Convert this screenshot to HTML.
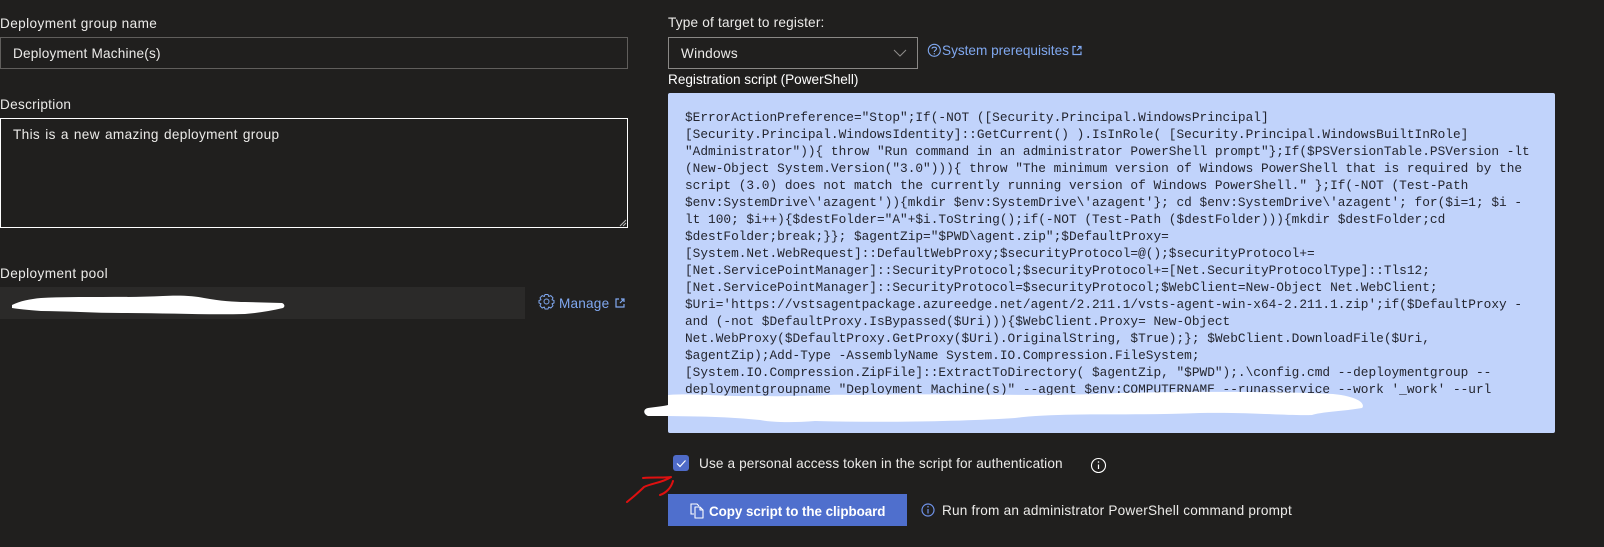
<!DOCTYPE html>
<html>
<head>
<meta charset="utf-8">
<style>
html,body{margin:0;padding:0;background:#201f1e}
body{position:relative;width:1604px;height:547px;overflow:hidden;font-family:"Liberation Sans",sans-serif;font-size:13.6px;color:#ecebe9}
.t{position:absolute;white-space:pre;line-height:18px}
.b{position:absolute;box-sizing:border-box}
.link{color:#80a8f0}
pre{position:absolute;left:685px;top:109px;margin:0;font-family:"Liberation Mono",monospace;font-size:12.8px;line-height:17px;color:#23252f}
svg{position:absolute;left:0;top:0}
</style>
</head>
<body>
<div class="t" style="left:0;top:15px;letter-spacing:.4px">Deployment group name</div>
<div class="b" style="left:0;top:37px;width:628px;height:32px;border:1px solid #605e5c"></div>
<div class="t" style="left:13px;top:45px;letter-spacing:.2px">Deployment Machine(s)</div>

<div class="t" style="left:0;top:96px;letter-spacing:.3px">Description</div>
<div class="b" style="left:0;top:118px;width:628px;height:110px;border:1px solid #fff"></div>
<div class="t" style="left:13px;top:126px;letter-spacing:.35px;word-spacing:1px">This is a new amazing deployment group</div>

<div class="t" style="left:0;top:265px;letter-spacing:.4px">Deployment pool</div>
<div class="b" style="left:0;top:287px;width:525px;height:32px;background:#2b2a29"></div>
<div class="t link" style="left:559px;top:295px;letter-spacing:.2px">Manage</div>

<div class="t" style="left:668px;top:14px;letter-spacing:.2px">Type of target to register:</div>
<div class="b" style="left:668px;top:37px;width:250px;height:32px;border:1px solid #8a8886"></div>
<div class="t" style="left:681px;top:45px;letter-spacing:.25px">Windows</div>
<div class="t link" style="left:942px;top:42px;letter-spacing:0">System prerequisites</div>

<div class="t" style="left:668px;top:71px;color:#fff;letter-spacing:0">Registration script (PowerShell)</div>
<div class="b" style="left:668px;top:93px;width:887px;height:340px;background:#c1d3fb;border-radius:2px"></div>
<pre>$ErrorActionPreference="Stop";If(-NOT ([Security.Principal.WindowsPrincipal]
[Security.Principal.WindowsIdentity]::GetCurrent() ).IsInRole( [Security.Principal.WindowsBuiltInRole]
"Administrator")){ throw "Run command in an administrator PowerShell prompt"};If($PSVersionTable.PSVersion -lt
(New-Object System.Version("3.0"))){ throw "The minimum version of Windows PowerShell that is required by the
script (3.0) does not match the currently running version of Windows PowerShell." };If(-NOT (Test-Path
$env:SystemDrive\'azagent')){mkdir $env:SystemDrive\'azagent'}; cd $env:SystemDrive\'azagent'; for($i=1; $i -
lt 100; $i++){$destFolder="A"+$i.ToString();if(-NOT (Test-Path ($destFolder))){mkdir $destFolder;cd
$destFolder;break;}}; $agentZip="$PWD\agent.zip";$DefaultProxy=
[System.Net.WebRequest]::DefaultWebProxy;$securityProtocol=@();$securityProtocol+=
[Net.ServicePointManager]::SecurityProtocol;$securityProtocol+=[Net.SecurityProtocolType]::Tls12;
[Net.ServicePointManager]::SecurityProtocol=$securityProtocol;$WebClient=New-Object Net.WebClient;
$Uri='https://vstsagentpackage.azureedge.net/agent/2.211.1/vsts-agent-win-x64-2.211.1.zip';if($DefaultProxy -
and (-not $DefaultProxy.IsBypassed($Uri))){$WebClient.Proxy= New-Object
Net.WebProxy($DefaultProxy.GetProxy($Uri).OriginalString, $True);}; $WebClient.DownloadFile($Uri,
$agentZip);Add-Type -AssemblyName System.IO.Compression.FileSystem;
[System.IO.Compression.ZipFile]::ExtractToDirectory( $agentZip, "$PWD");.\config.cmd --deploymentgroup --
deploymentgroupname "Deployment Machine(s)" --agent $env:COMPUTERNAME --runasservice --work '_work' --url</pre>

<div class="b" style="left:673px;top:455px;width:16px;height:16px;background:#4f6bc8;border-radius:3px"></div>
<div class="t" style="left:699px;top:455px;letter-spacing:.13px">Use a personal access token in the script for authentication</div>

<div class="b" style="left:668px;top:494px;width:239px;height:32px;background:#4f6fcd"></div>
<div class="t" style="left:709px;top:503px;color:#fff;font-weight:bold;font-size:13.4px;letter-spacing:-.05px">Copy script to the clipboard</div>
<div class="t" style="left:942px;top:502px;letter-spacing:.21px">Run from an administrator PowerShell command prompt</div>

<svg width="1604" height="547" viewBox="0 0 1604 547" fill="none">
  <!-- pool scribble -->
  <path d="M12 305 C20 301 30 299 41 298 C80 296 125 298 163 296 C180 295 195 296 204 298 C220 301 235 302 245 302 L282 303 C285 304 285 307 283 308 C270 311 258 313 245 314 C205 315 165 313 122 313 C95 313 65 311 41 311 C28 310 18 309 12 308 Z" fill="#fff"/>
  <!-- script scribble -->
  <path d="M668 395 C700 393 720 397 760 396 C800 397 830 394 850 395 C950 393 1050 397 1120 393 C1200 391 1300 392 1333 394 C1362 397 1365 405 1362 408 C1345 411 1320 412 1312 415 C1290 416 1250 412 1200 413 C1130 416 1060 412 1015 418 C970 421 890 423 815 421 C790 423 770 422 760 420 C730 417 700 416 648 416 C643 414 643 409 648 408 C655 407 665 406 668 405 Z" fill="#fff"/>
  <!-- chevron -->
  <path d="M894 50 L900 56 L906 50" stroke="#8f8d8b" stroke-width="1"/>
  <!-- help icon -->
  <circle cx="934.300" cy="50.300" r="6" stroke="#80a8f0" stroke-width="1.100"/>
  <path d="M932 48.800 C932 46.600 936.500 46.600 936.500 48.800 C936.500 50.300 934.300 50.300 934.300 52" stroke="#80a8f0" stroke-width="1.100"/>
  <circle cx="934.300" cy="53.800" r=".7" fill="#80a8f0"/>
  <!-- external link 1 -->
  <path d="M1076 46.500 H1073 V54.500 H1081 V51.500 M1077 50.500 L1081 46.500 M1078 46.500 H1081 V49.500" stroke="#80a8f0" stroke-width="1.200"/>
  <!-- gear -->
  <circle cx="546.500" cy="301.500" r="2.500" stroke="#80a8f0" stroke-width="1"/>
  <path d="M545 294.500 H548 L548.700 296.500 L550.800 295.600 L553 297.800 L552 299.800 L554 300.500 V303 L552 303.700 L553 305.800 L550.800 308 L548.700 307 L548 309 H545 L544.300 307 L542.200 308 L540 305.800 L541 303.700 L539 303 V300.500 L541 299.800 L540 297.800 L542.200 295.600 L544.300 296.500 Z" stroke="#80a8f0" stroke-width="1" stroke-linejoin="round"/>
  <!-- external link 2 -->
  <path d="M619 299 H616 V307 H624 V304 M620 303 L624 299 M621 299 H624 V302" stroke="#80a8f0" stroke-width="1.200"/>
  <!-- check -->
  <path d="M677 463.500 L680 466.500 L685.500 460.500" stroke="#fff" stroke-width="1.200"/>
  <!-- info icons -->
  <circle cx="1098.500" cy="465.500" r="7" stroke="#fff" stroke-width="1.100"/>
  <path d="M1098.500 464.500 V469" stroke="#fff" stroke-width="1.200"/>
  <circle cx="1098.500" cy="462" r=".8" fill="#fff"/>
  <circle cx="928" cy="510" r="6" stroke="#6f92e8" stroke-width="1.200"/>
  <path d="M928 509 V513.500" stroke="#6f92e8" stroke-width="1.200"/>
  <circle cx="928" cy="506.800" r=".8" fill="#6f92e8"/>
  <!-- copy icon -->
  <path d="M694 514 H691 V504 H697 L699 506" stroke="#fff" stroke-width="1.100"/>
  <path d="M695 507 H700 L703 510 V518 H695 Z M700 507 V510 H703" stroke="#fff" stroke-width="1.100" stroke-linejoin="round"/>
  <!-- red arrow -->
  <path d="M627 502 C633 497 638 493 644 487 C652 483 662 483 671 477 M643 478 C654 477 664 478 671 477 M660 495 C666 493 671 488 673 481" stroke="#e01010" stroke-width="2" stroke-linecap="round" stroke-linejoin="round"/>
  <!-- textarea resize grip -->
  <path d="M620 226 L626 220 M623 226 L626 223" stroke="#bbb" stroke-width="1"/>
</svg>
</body>
</html>
